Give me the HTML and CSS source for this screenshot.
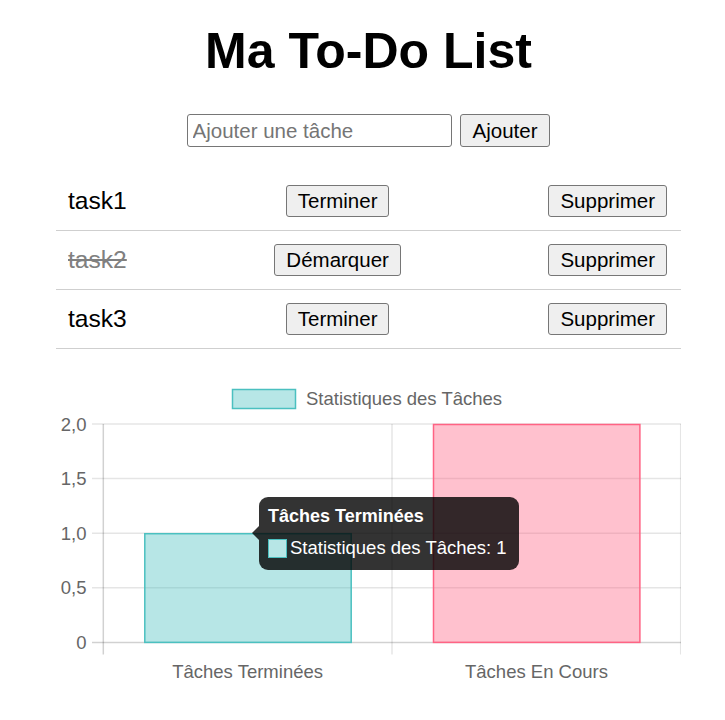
FILE: index.html
```html
<!DOCTYPE html>
<html lang="fr">

<head>
    <meta charset="UTF-8">
    <meta name="viewport" content="width=device-width, initial-scale=1.0">
    <title>Ma To-Do List</title>
    <link rel="stylesheet" href="styles.css">
</head>

<body>
    <div class="container">
        <h1>Ma To-Do List</h1>

        <div class="add-form">
            <input type="text" id="taskInput" placeholder="Ajouter une tâche">
            <button class="btn">Ajouter</button>
        </div>

        <ul class="task-list">
            <li class="task">
                <span class="task-name">task1</span>
                <button class="btn">Terminer</button>
                <button class="btn">Supprimer</button>
            </li>
            <li class="task done">
                <span class="task-name">task2</span>
                <button class="btn">Démarquer</button>
                <button class="btn">Supprimer</button>
            </li>
            <li class="task">
                <span class="task-name">task3</span>
                <button class="btn">Terminer</button>
                <button class="btn">Supprimer</button>
            </li>
        </ul>

        <div class="chart">
            <svg class="chart-svg" width="625" height="325" viewBox="56 375 625 325">
                <!-- legende -->
                <rect class="bar-teal" x="232.5" y="389.5" width="63" height="19" />
                <text class="legend-label" x="306" y="404.5">Statistiques des Tâches</text>

                <!-- grille -->
                <g class="grid">
                    <line x1="92" y1="424" x2="681" y2="424" />
                    <line x1="92" y1="478.6" x2="681" y2="478.6" />
                    <line x1="92" y1="533.2" x2="681" y2="533.2" />
                    <line x1="92" y1="587.8" x2="681" y2="587.8" />
                    <line x1="392" y1="424" x2="392" y2="654.5" />
                    <line x1="680.7" y1="424" x2="680.7" y2="654.5" />
                </g>
                <g class="axis">
                    <line x1="92" y1="642.4" x2="681" y2="642.4" />
                    <line x1="103.3" y1="424" x2="103.3" y2="654.5" />
                </g>

                <!-- graduations -->
                <g class="tick-y">
                    <text x="86.5" y="430.6">2,0</text>
                    <text x="86.5" y="485.2">1,5</text>
                    <text x="86.5" y="539.8">1,0</text>
                    <text x="86.5" y="594.4">0,5</text>
                    <text x="86.5" y="649">0</text>
                </g>

                <!-- barres -->
                <rect class="bar-teal" x="144.8" y="533.7" width="206.4" height="108.7" />
                <rect class="bar-pink" x="433.5" y="424.5" width="206.4" height="217.9" />

                <g class="tick-x">
                    <text x="247.6" y="677.5">Tâches Terminées</text>
                    <text x="536.5" y="677.5">Tâches En Cours</text>
                </g>
            </svg>

            <div class="tooltip">
                <div class="tooltip-title">Tâches Terminées</div>
                <div class="tooltip-body">
                    <span class="tooltip-box"></span>
                    <span>Statistiques des Tâches: 1</span>
                </div>
            </div>
        </div>
    </div>
</body>

</html>
```

FILE: styles.css
```css
body {
    margin: 0 0 0 12px;
    font-family: "Liberation Sans", Arial, sans-serif;
    background: #fff;
    color: #000;
}

.container {
    width: 625px;
    margin: 0 auto;
}

h1 {
    margin: 23px 0 35px;
    font-size: 50px;
    line-height: 56px;
    text-align: center;
}

.add-form {
    display: flex;
    justify-content: center;
    gap: 8px;
}

#taskInput {
    box-sizing: border-box;
    width: 265px;
    height: 33px;
    padding: 0 5px;
    border: 1px solid #767676;
    border-radius: 3px;
    font-family: inherit;
    font-size: 20.5px;
}

#taskInput::placeholder {
    color: #757575;
}

.btn {
    box-sizing: border-box;
    height: 32px;
    padding: 0 11px;
    border: 1px solid #767676;
    border-radius: 3px;
    background-color: #efefef;
    font-family: inherit;
    font-size: 20.5px;
    color: #000;
    cursor: pointer;
}

.add-form .btn {
    height: 33px;
    padding: 0 12px;
}

.task-list {
    list-style: none;
    margin: 25px 0 0;
    padding: 0;
}

.task {
    display: flex;
    justify-content: space-between;
    align-items: center;
    padding: 13px 14px 13px 12px;
    border-bottom: 1px solid #cfcfcf;
}

.task-name {
    font-size: 24.6px;
}

.done .task-name {
    color: gray;
    text-decoration: line-through;
}

.chart {
    position: relative;
    margin-top: 26px;
    height: 325px;
}

.chart-svg {
    display: block;
    font-family: "Liberation Sans", Arial, sans-serif;
    font-size: 18.5px;
}

.legend-label {
    fill: #666;
}

.grid line {
    stroke: rgba(0, 0, 0, 0.1);
    stroke-width: 1.5;
}

.axis line {
    stroke: rgba(0, 0, 0, 0.18);
    stroke-width: 1.5;
}

.tick-y text {
    fill: #666;
    text-anchor: end;
}

.tick-x text {
    fill: #666;
    text-anchor: middle;
}

.bar-teal {
    fill: rgba(75, 192, 192, 0.4);
    stroke: rgb(75, 192, 192);
    stroke-width: 1.5;
}

.bar-pink {
    fill: rgba(255, 99, 132, 0.4);
    stroke: rgb(255, 99, 132);
    stroke-width: 1.5;
}

.tooltip {
    position: absolute;
    left: 203px;
    top: 122px;
    box-sizing: border-box;
    width: 260px;
    height: 73px;
    padding: 9px 10px 0 9px;
    border-radius: 9px;
    background: rgba(0, 0, 0, 0.8);
    color: #fff;
}

.tooltip::before {
    content: "";
    position: absolute;
    left: -7.5px;
    top: 28.5px;
    border-top: 7.5px solid transparent;
    border-bottom: 7.5px solid transparent;
    border-right: 7.5px solid rgba(0, 0, 0, 0.8);
}

.tooltip-title {
    font-size: 18px;
    font-weight: bold;
    line-height: 20px;
}

.tooltip-body {
    display: flex;
    align-items: center;
    gap: 3px;
    margin-top: 11px;
    font-size: 18.5px;
    line-height: 22px;
}

.tooltip-box {
    box-sizing: border-box;
    width: 19px;
    height: 19px;
    border: 1.5px solid rgb(75, 192, 192);
    background: #b7e6e6;
}
```
